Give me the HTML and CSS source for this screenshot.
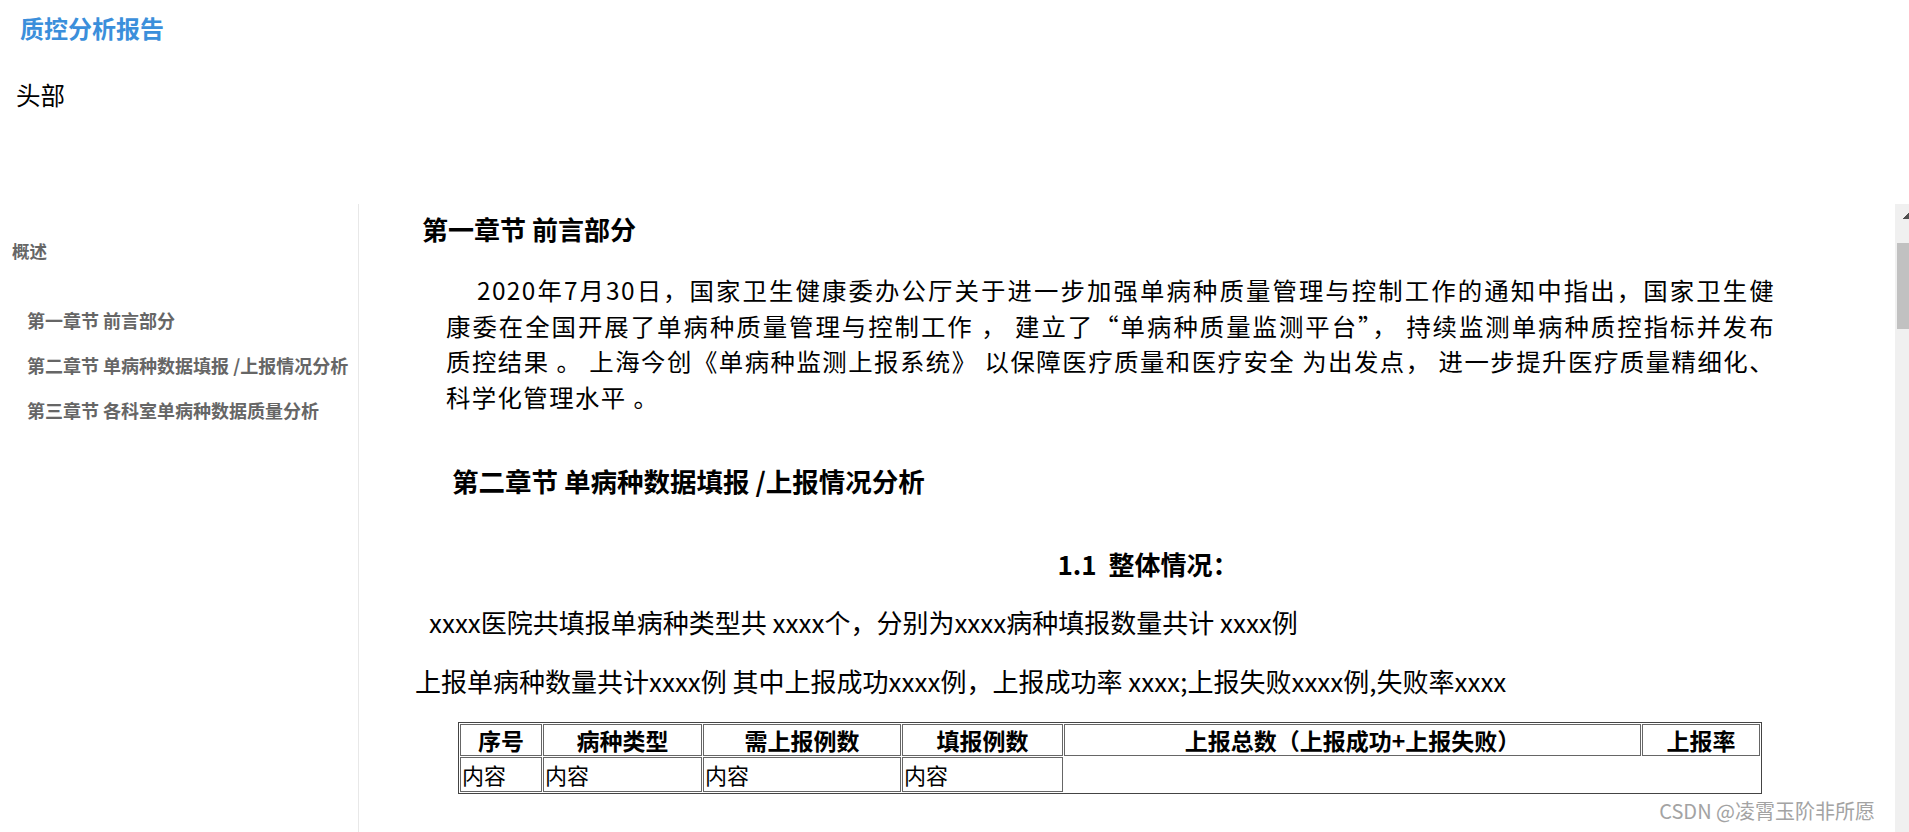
FILE: index.html
```html
<!DOCTYPE html>
<html lang="zh-CN">
<head>
<meta charset="utf-8">
<title>质控分析报告</title>
<link rel="stylesheet" href="styles.css">
</head>
<body>
<header class="top">
  <h1 class="brand">质控分析报告</h1>
  <div class="head-slot">头部</div>
</header>
<div class="layout">
  <aside class="side">
    <div class="side-title">概述</div>
    <nav class="side-nav">
      <a class="side-link">第一章节 前言部分</a>
      <a class="side-link">第二章节 单病种数据填报 /上报情况分析</a>
      <a class="side-link">第三章节 各科室单病种数据质量分析</a>
    </nav>
  </aside>
  <main class="main">
    <h2 class="ch1">第一章节 前言部分</h2>
    <p class="intro"><span class="ln ln-j ln-first">2020年7月30日，国家卫生健康委办公厅关于进一步加强单病种质量管理与控制工作的通知中指出，国家卫生健</span><span class="ln ln-j">康委在全国开展了单病种质量管理与控制工作 ， 建立了“单病种质量监测平台”， 持续监测单病种质控指标并发布</span><span class="ln ln-j">质控结果 。 上海今创《单病种监测上报系统》 以保障医疗质量和医疗安全 为出发点， 进一步提升医疗质量精细化、</span><span class="ln">科学化管理水平 。</span></p>
    <h2 class="ch2">第二章节 单病种数据填报 /上报情况分析</h2>
    <h3 class="sub">1.1&nbsp;&nbsp;整体情况：</h3>
    <p class="s1">xxxx医院共填报单病种类型共 xxxx个，分别为xxxx病种填报数量共计 xxxx例</p>
    <p class="s2">上报单病种数量共计xxxx例 其中上报成功xxxx例，上报成功率 xxxx;上报失败xxxx例,失败率xxxx</p>
    <table class="grid">
      <thead>
        <tr>
          <th class="c1">序号</th>
          <th class="c2">病种类型</th>
          <th class="c3">需上报例数</th>
          <th class="c4">填报例数</th>
          <th class="c5">上报总数（上报成功+上报失败）</th>
          <th class="c6">上报率</th>
        </tr>
      </thead>
      <tbody>
        <tr>
          <td>内容</td>
          <td>内容</td>
          <td>内容</td>
          <td>内容</td>
        </tr>
      </tbody>
    </table>
  </main>
  <div class="vbar" aria-hidden="true">
    <div class="vbar-up"></div>
    <div class="vbar-thumb"></div>
  </div>
</div>
<div class="watermark">CSDN @凌霄玉阶非所愿</div>
</body>
</html>
```
FILE: styles.css
```css
html, body {
  margin: 0;
  padding: 0;
  height: 100%;
  overflow: hidden;
  background: #fff;
}
body {
  font-family: "Noto Sans CJK SC", "Noto Sans", sans-serif;
  color: #000;
  position: relative;
}
.top {
  height: 204px;
  box-sizing: border-box;
  padding-top: 14px;
}
.brand {
  margin: 0;
  padding-left: 20px;
  font-size: 24px;
  line-height: 28px;
  font-weight: 700;
  color: #3b8fdb;
}
.head-slot {
  margin-top: 38px;
  padding-left: 16px;
  font-size: 24.5px;
  line-height: 30px;
}
.layout {
  display: flex;
  height: 640px;
}
.side {
  width: 358px;
  flex: none;
  border-right: 1px solid #e8e8e8;
  box-sizing: content-box;
  padding-top: 37px;
}
.side-title {
  padding-left: 12px;
  font-size: 17.5px;
  line-height: 20px;
  font-weight: 700;
  color: #666;
}
.side-nav {
  display: flex;
  flex-direction: column;
  gap: 25px;
  margin-top: 49px;
  padding-left: 27px;
}
.side-link {
  font-size: 18px;
  line-height: 20px;
  font-weight: 700;
  color: #666;
}
.main {
  flex: 1;
  overflow: hidden;
  padding-top: 6px;
  box-sizing: border-box;
}
.vbar {
  width: 14px;
  flex: none;
  background: #f0f0f0;
  display: flex;
  flex-direction: column;
}
.vbar-up {
  height: 39px;
  background-image: linear-gradient(to bottom right, transparent 50%, #505050 50%);
  background-size: 7px 6px;
  background-position: 7px 9px;
  background-repeat: no-repeat;
}
.vbar-thumb {
  height: 86px;
  margin-left: 2px;
  background: #c1c1c1;
}
.ch1, .ch2 {
  margin: 0;
  font-size: 26px;
  line-height: 38px;
  font-weight: 700;
}
.ch1 {
  margin-left: 63px;
}
.intro {
  margin: 24px 0 0 87px;
  width: 1329px;
  font-size: 24.4px;
  line-height: 35.5px;
  letter-spacing: 1.4px;
  white-space: nowrap;
}
.ln {
  display: block;
}
.ln-j {
  text-align: justify;
  text-align-last: justify;
}
.ln-first {
  text-indent: 31px;
}
.ch2 {
  margin: 48px 0 0 93px;
  font-size: 26.5px;
}
.sub {
  margin: 45px 0 0;
  padding-left: 42px;
  text-align: center;
  font-size: 26px;
  line-height: 38px;
  font-weight: 700;
}
.s1, .s2 {
  margin: 20px 0 0;
  font-size: 26px;
  line-height: 38px;
  white-space: nowrap;
}
.s1 { margin-left: 70px; }
.s2 { margin-left: 56px; margin-top: 21px; }
.grid {
  margin: 22px 0 0 99px;
  width: 1304px;
  border: 1px solid #444;
  border-spacing: 1px;
  border-collapse: separate;
  font-size: 22px;
}
.grid th, .grid td {
  border: 1px solid #666;
  padding: 1px;
}
.grid th {
  font-size: 23px;
  font-weight: 700;
  line-height: 28px;
  text-align: center;
}
.grid td {
  line-height: 31px;
  text-align: left;
}
.c1 { width: 78px; }
.c2 { width: 155px; }
.c3 { width: 194px; }
.c4 { width: 157px; }
.c5 { width: 573px; }
.watermark {
  position: absolute;
  right: 34px;
  bottom: 10px;
  font-size: 20px;
  line-height: 22px;
  color: #a3a3a3;
}
```
